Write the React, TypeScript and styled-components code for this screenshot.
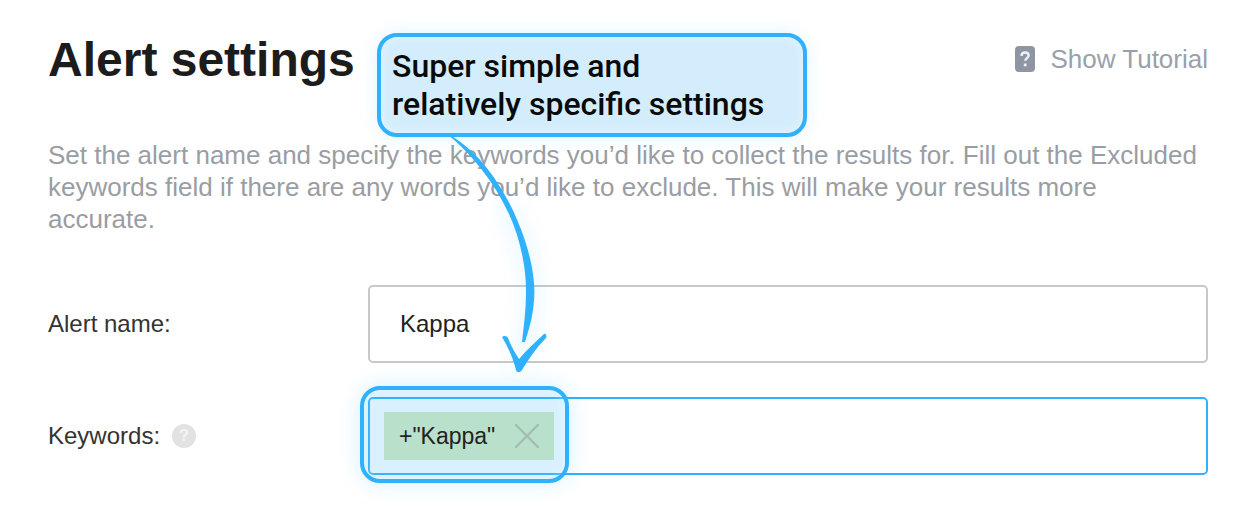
import React from 'react'
import styled, { createGlobalStyle } from 'styled-components'
import { X } from 'lucide-react'

const Global = createGlobalStyle`
  html, body {
    margin: 0;
    padding: 0;
    background: #fff;
    overflow: hidden;
  }
  body {
    font-family: "Liberation Sans", Arial, sans-serif;
  }
`

const Page = styled.div`
  position: relative;
  width: 1254px;
  height: 514px;
  padding: 33px 46px 0 48px;
  box-sizing: border-box;
  overflow: hidden;
`

const Header = styled.div`
  display: flex;
  justify-content: space-between;
  align-items: flex-start;
  height: 106px;
`

const Title = styled.h1`
  margin: 0;
  font-size: 48px;
  line-height: 54px;
  font-weight: 700;
  color: #1c1c1c;
`

const Tutorial = styled.div`
  display: flex;
  align-items: center;
  gap: 15px;
  height: 52px;
  font-size: 26px;
  color: #9aa0ab;
`

const Description = styled.p`
  margin: 0;
  font-size: 26px;
  line-height: 32px;
  color: #9a9da3;
`

const Form = styled.div`
  display: flex;
  flex-direction: column;
  gap: 34px;
  margin-top: 50px;
`

const Row = styled.div`
  display: grid;
  grid-template-columns: 320px 840px;
  align-items: center;
`

const Label = styled.label`
  display: flex;
  align-items: center;
  gap: 12px;
  font-size: 24px;
  color: #333;
`

const Field = styled.div<{ $active?: boolean }>`
  position: relative;
  display: flex;
  align-items: center;
  height: 78px;
  box-sizing: border-box;
  padding: 0 14px;
  border: 2px solid ${p => (p.$active ? '#2fb1fd' : '#c8c8c8')};
  border-radius: 5px;
  font-size: 24px;
  color: #222;
`

const Value = styled.span`
  padding-left: 16px;
`

const Chip = styled.div`
  position: relative;
  z-index: 2;
  display: flex;
  align-items: center;
  justify-content: space-between;
  width: 170px;
  height: 48px;
  box-sizing: border-box;
  padding: 0 5px 0 15px;
  background: #b8e0cb;
  font-size: 23px;
  color: #222;
`

const ChipClose = styled(X)`
  color: #a3bdb0;
`

const Help = styled.span`
  display: inline-flex;
  align-items: center;
  justify-content: center;
  width: 24px;
  height: 24px;
  border-radius: 50%;
  background: #e2e2e2;
  color: #f4f4f4;
  font-size: 17px;
  font-weight: 700;
`

const Highlight = styled.div`
  position: absolute;
  z-index: 1;
  left: -10px;
  top: -13px;
  width: 209px;
  height: 97px;
  box-sizing: border-box;
  border: 4px solid #2fb1fd;
  border-radius: 20px;
  background: rgba(47, 177, 253, 0.18);
  box-shadow: 0 0 22px rgba(47, 177, 253, 0.2), inset 0 0 8px rgba(255, 255, 255, 0.4);
`

const Callout = styled.div`
  position: absolute;
  z-index: 3;
  left: 377px;
  top: 33px;
  width: 430px;
  height: 104px;
  box-sizing: border-box;
  padding: 10px 0 0 11px;
  border: 4px solid #2fb1fd;
  border-radius: 20px;
  background: #d4edfd;
  box-shadow: 0 0 18px rgba(47, 177, 253, 0.15), inset 0 0 8px rgba(255, 255, 255, 0.5);
  font-family: Roboto, "Liberation Sans", sans-serif;
  font-weight: 500;
  font-size: 32px;
  line-height: 38px;
  color: #0a0a0a;
`

const Arrow = styled.svg`
  position: absolute;
  z-index: 4;
  left: 0;
  top: 0;
  pointer-events: none;
`

export default function App() {
  return (
    <Page>
      <Global />
      <Header>
        <Title>Alert settings</Title>
        <Tutorial>
          <svg width="20" height="26" viewBox="0 0 20 26">
            <rect width="20" height="26" rx="4" fill="#8f96a3" />
            <path d="M6.5 10c0-2.200 1.500-3.500 3.600-3.500s3.500 1.200 3.500 3c0 2.600-3.300 2.600-3.300 5.300" fill="none" stroke="#eef0f3" strokeWidth="2.400" />
            <rect x="8.800" y="17.500" width="2.800" height="2.800" fill="#eef0f3" />
          </svg>
          Show Tutorial
        </Tutorial>
      </Header>
      <Description>
        Set the alert name and specify the keywords you’d like to collect the results for. Fill out the Excluded
        <br />
        keywords field if there are any words you’d like to exclude. This will make your results more
        <br />
        accurate.
      </Description>
      <Form>
        <Row>
          <Label>Alert name:</Label>
          <Field>
            <Value>Kappa</Value>
          </Field>
        </Row>
        <Row>
          <Label>
            Keywords:
            <Help>?</Help>
          </Label>
          <Field $active>
            <Highlight />
            <Chip>
              +"Kappa"
              <ChipClose size={44} strokeWidth={1.3} />
            </Chip>
          </Field>
        </Row>
      </Form>
      <Callout>
        Super simple and
        <br />
        relatively specific settings
      </Callout>
      <Arrow width="1254" height="514" viewBox="0 0 1254 514">
        <defs>
          <filter id="glow" x="-100%" y="-20%" width="300%" height="140%">
            <feGaussianBlur stdDeviation="10" />
          </filter>
        </defs>
        <path d="M505 205C530 250 540 300 520 365" fill="none" stroke="#2fb1fd" strokeOpacity="0.12" strokeWidth="12" filter="url(#glow)" />
        <path
          d="M446 133C480 150 505 190 518 222C530 250 536 280 534 300C533 318 528 332 525 342L522 342C524 325 526 310 526 290C526 264 519 236 509 214C494 182 472 154 446 133Z"
          fill="#2fb1fd"
        />
        <path
          d="M502 337C504 335 507 336 508 338C511 346 515 353 519 359C526 351 535 342 544 334C546 333 547 336 546 338C536 348 528 360 522 370C520 373 517 373 516 370C513 358 508 347 502 337Z"
          fill="#2fb1fd"
        />
      </Arrow>
    </Page>
  )
}
